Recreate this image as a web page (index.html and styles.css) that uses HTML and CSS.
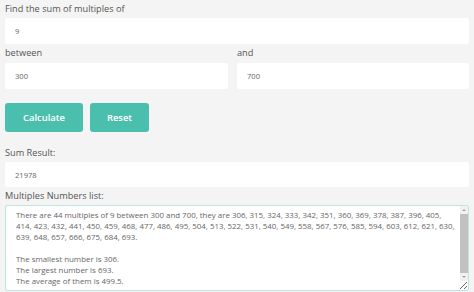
FILE: index.html
```html
<!DOCTYPE html>
<html lang="en">
<head>
    <meta charset="UTF-8">
    <meta name="viewport" content="width=device-width, initial-scale=1.0">
    <title>Sum of Multiples Calculator</title>
    <link rel="stylesheet" href="styles.css">
</head>
<body>

    <div class="calculator">
        <label class="label" for="multiple">Find the sum of multiples of</label>
        <input class="input" id="multiple" type="text" value="9">

        <div class="range">
            <div>
                <label class="label" for="from">between</label>
                <input class="input" id="from" type="text" value="300">
            </div>
            <div>
                <label class="label" for="to">and</label>
                <input class="input" id="to" type="text" value="700">
            </div>
        </div>

        <div class="buttons">
            <button class="btn btn-calc" type="button">Calculate</button>
            <button class="btn btn-reset" type="button">Reset</button>
        </div>

        <label class="label" for="sum">Sum Result:</label>
        <input class="input" id="sum" type="text" value="21978" readonly>

        <label class="label" for="list">Multiples Numbers list:</label>
        <div class="list-box">
            <textarea class="list" id="list" readonly>There are 44 multiples of 9 between 300 and 700, they are 306, 315, 324, 333, 342, 351, 360, 369, 378, 387, 396, 405,
414, 423, 432, 441, 450, 459, 468, 477, 486, 495, 504, 513, 522, 531, 540, 549, 558, 567, 576, 585, 594, 603, 612, 621, 630,
639, 648, 657, 666, 675, 684, 693.

The smallest number is 306.
The largest number is 693.
The average of them is 499.5.</textarea>
            <!-- scrollbar drawn by hand, the headless browser hides the native one -->
            <div class="scrollbar">
                <span class="arrow arrow-up"></span>
                <span class="thumb"></span>
                <span class="arrow arrow-down"></span>
            </div>
        </div>
    </div>

</body>
</html>
```

FILE: styles.css
```css
body {
    font-family: "Open Sans", Arial, sans-serif;
    background-color: #f4f4f4;
    color: #555;
    margin: 0;
    padding: 0 5px;
}

.calculator {
    display: flex;
    flex-direction: column;
}

.label {
    display: block;
    font-size: 9.2px;
    line-height: 18px;
    color: #555;
}

.input {
    box-sizing: border-box;
    width: 100%;
    height: 26px;
    padding: 0 10px;
    border: none;
    border-radius: 2px;
    background-color: #ffffff;
    font-family: inherit;
    font-size: 7.6px;
    color: #666;
    outline: none;
}

#sum {
    height: 25px;
}

.range {
    display: grid;
    grid-template-columns: 223px 1fr;
    column-gap: 9px;
}

.buttons {
    display: flex;
    gap: 7px;
    margin: 14px 0 12px;
}

.btn {
    height: 29px;
    border: none;
    border-radius: 3px;
    background-color: #4bbfad;
    color: #fff;
    font-family: inherit;
    font-size: 9.4px;
    font-weight: 600;
}

.btn-calc {
    width: 78px;
}

.btn-reset {
    width: 59px;
}

.list-box {
    position: relative;
}

.list {
    display: block;
    box-sizing: border-box;
    width: 100%;
    height: 86px;
    padding: 4px 10px;
    border: 1px solid #bfe4df;
    border-radius: 2px;
    background-color: #fff;
    font-family: inherit;
    font-size: 7.9px;
    line-height: 11px;
    color: #666;
    white-space: pre;
    overflow: hidden;
    outline: none;
}

.scrollbar {
    position: absolute;
    top: 1px;
    right: 1px;
    bottom: 10px;
    width: 8px;
    display: flex;
    flex-direction: column;
    background-color: #f1f1f1;
}

.thumb {
    flex: 1;
    background-color: #c1c1c1;
}

.arrow {
    height: 8px;
    display: flex;
    align-items: center;
    justify-content: center;
}

.arrow::before {
    content: "";
    border-left: 2px solid transparent;
    border-right: 2px solid transparent;
}

.arrow-up::before {
    border-bottom: 2px solid #a3a3a3;
}

.arrow-down::before {
    border-top: 2px solid #a3a3a3;
}
```
